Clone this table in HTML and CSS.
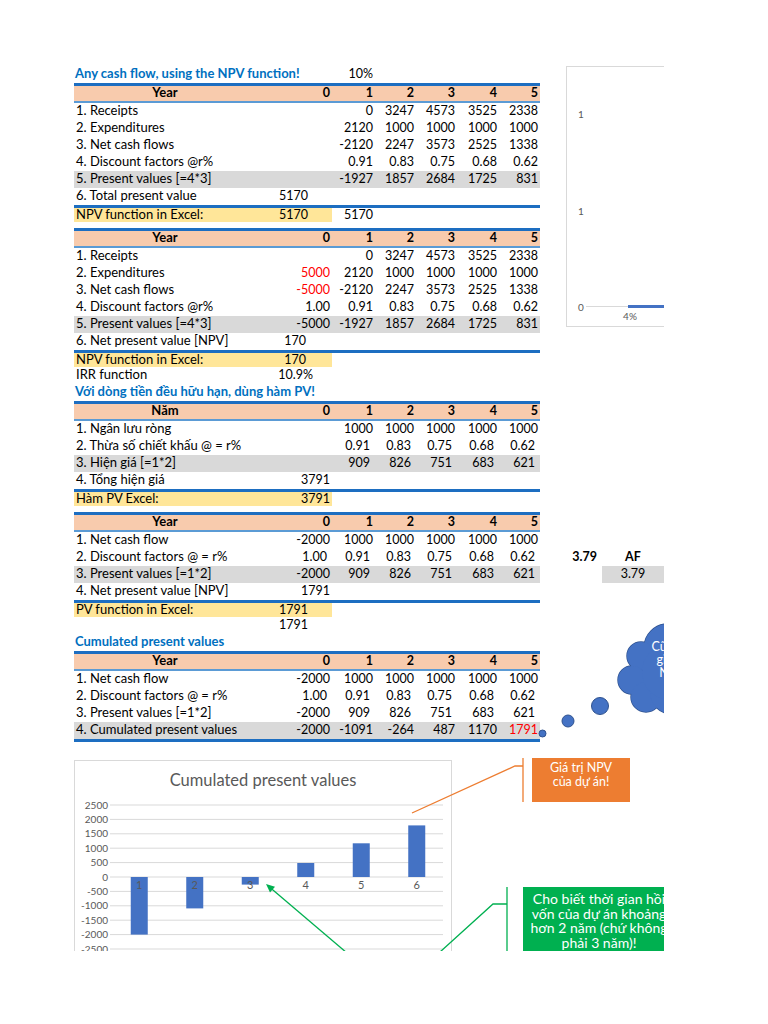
FILE: index.html
```html
<!DOCTYPE html>
<html lang="vi">
<head>
<meta charset="utf-8">
<title>NPV - Cumulated present values</title>
<link rel="stylesheet" href="styles.css">
</head>
<body>
<div class="page">
  <div class="sheet">
    <div class="row"><div class="title">Any cash flow, using the NPV function!</div><div class="n k1">10%</div></div>
    <section class="tbl">
      <div class="row hdr"><div class="hl">Year</div><div class="n bc">0</div><div class="n k1">1</div><div class="n k2">2</div><div class="n k3">3</div><div class="n k4">4</div><div class="n k5">5</div></div>
      <div class="row"><div class="l">1. Receipts</div><div class="n k1">0</div><div class="n k2">3247</div><div class="n k3">4573</div><div class="n k4">3525</div><div class="n k5">2338</div></div>
      <div class="row"><div class="l">2. Expenditures</div><div class="n k1">2120</div><div class="n k2">1000</div><div class="n k3">1000</div><div class="n k4">1000</div><div class="n k5">1000</div></div>
      <div class="row"><div class="l">3. Net cash flows</div><div class="n k1">-2120</div><div class="n k2">2247</div><div class="n k3">3573</div><div class="n k4">2525</div><div class="n k5">1338</div></div>
      <div class="row"><div class="l">4. Discount factors @r%</div><div class="n k1">0.91</div><div class="n k2">0.83</div><div class="n k3">0.75</div><div class="n k4">0.68</div><div class="n k5">0.62</div></div>
      <div class="row grey"><div class="l">5. Present values [=4*3]</div><div class="n k1">-1927</div><div class="n k2">1857</div><div class="n k3">2684</div><div class="n k4">1725</div><div class="n k5">831</div></div>
      <div class="row"><div class="l">6. Total present value</div><div class="n b">5170</div></div>
      <div class="row fn yel"><div class="l">NPV function in Excel:</div><div class="n b">5170</div><div class="n k1">5170</div></div>
    </section>

    <section class="tbl gap">
      <div class="row hdr"><div class="hl">Year</div><div class="n bc">0</div><div class="n k1">1</div><div class="n k2">2</div><div class="n k3">3</div><div class="n k4">4</div><div class="n k5">5</div></div>
      <div class="row"><div class="l">1. Receipts</div><div class="n k1">0</div><div class="n k2">3247</div><div class="n k3">4573</div><div class="n k4">3525</div><div class="n k5">2338</div></div>
      <div class="row"><div class="l">2. Expenditures</div><div class="n bc red">5000</div><div class="n k1">2120</div><div class="n k2">1000</div><div class="n k3">1000</div><div class="n k4">1000</div><div class="n k5">1000</div></div>
      <div class="row"><div class="l">3. Net cash flows</div><div class="n bc red">-5000</div><div class="n k1">-2120</div><div class="n k2">2247</div><div class="n k3">3573</div><div class="n k4">2525</div><div class="n k5">1338</div></div>
      <div class="row"><div class="l">4. Discount factors @r%</div><div class="n bc">1.00</div><div class="n k1">0.91</div><div class="n k2">0.83</div><div class="n k3">0.75</div><div class="n k4">0.68</div><div class="n k5">0.62</div></div>
      <div class="row grey"><div class="l">5. Present values [=4*3]</div><div class="n bc">-5000</div><div class="n k1">-1927</div><div class="n k2">1857</div><div class="n k3">2684</div><div class="n k4">1725</div><div class="n k5">831</div></div>
      <div class="row"><div class="l">6. Net present value [NPV]</div><div class="n b p4">170</div></div>
      <div class="row fn yel"><div class="l">NPV function in Excel:</div><div class="n b p4">170</div></div>
      <div class="row"><div class="l">IRR function</div><div class="n bc p20">10.9%</div></div>
      <div class="row"><div class="title">Với dòng tiền đều hữu hạn, dùng hàm PV!</div></div>
    </section>

    <section class="tbl">
      <div class="row hdr"><div class="hl">Năm</div><div class="n bc">0</div><div class="n k1">1</div><div class="n k2">2</div><div class="n k3">3</div><div class="n k4">4</div><div class="n k5">5</div></div>
      <div class="row"><div class="l">1. Ngân lưu ròng</div><div class="n k1">1000</div><div class="n k2">1000</div><div class="n k3">1000</div><div class="n k4">1000</div><div class="n k5">1000</div></div>
      <div class="row fmt"><div class="l">2. Thừa số chiết khấu @ = r%</div><div class="n k1">0.91</div><div class="n k2">0.83</div><div class="n k3">0.75</div><div class="n k4">0.68</div><div class="n k5">0.62</div></div>
      <div class="row grey fmt"><div class="l">3. Hiện giá [=1*2]</div><div class="n k1">909</div><div class="n k2">826</div><div class="n k3">751</div><div class="n k4">683</div><div class="n k5">621</div></div>
      <div class="row"><div class="l">4. Tổng hiện giá</div><div class="n bc">3791</div></div>
      <div class="row fn yel"><div class="l">Hàm PV Excel:</div><div class="n bc">3791</div></div>
    </section>

    <section class="tbl gap">
      <div class="row hdr"><div class="hl">Year</div><div class="n bc">0</div><div class="n k1">1</div><div class="n k2">2</div><div class="n k3">3</div><div class="n k4">4</div><div class="n k5">5</div></div>
      <div class="row"><div class="l">1. Net cash flow</div><div class="n bc">-2000</div><div class="n k1">1000</div><div class="n k2">1000</div><div class="n k3">1000</div><div class="n k4">1000</div><div class="n k5">1000</div></div>
      <div class="row wide fmt"><div class="l">2. Discount factors @ = r%</div><div class="n bc f0">1.00</div><div class="n k1">0.91</div><div class="n k2">0.83</div><div class="n k3">0.75</div><div class="n k4">0.68</div><div class="n k5">0.62</div><div class="n x1">3.79</div><div class="x2 bold">AF</div></div>
      <div class="row wide grey fmt"><div class="l">3. Present values [=1*2]</div><div class="n bc">-2000</div><div class="n k1">909</div><div class="n k2">826</div><div class="n k3">751</div><div class="n k4">683</div><div class="n k5">621</div><div class="x2 shade">3.79</div></div>
      <div class="row"><div class="l">4. Net present value [NPV]</div><div class="n bc">1791</div></div>
      <div class="row fn yel"><div class="l">PV function in Excel:</div><div class="n b">1791</div></div>
      <div class="row"><div class="n b">1791</div></div>
      <div class="row"><div class="title">Cumulated present values</div></div>
    </section>

    <section class="tbl">
      <div class="row hdr"><div class="hl">Year</div><div class="n bc">0</div><div class="n k1">1</div><div class="n k2">2</div><div class="n k3">3</div><div class="n k4">4</div><div class="n k5">5</div></div>
      <div class="row"><div class="l">1. Net cash flow</div><div class="n bc">-2000</div><div class="n k1">1000</div><div class="n k2">1000</div><div class="n k3">1000</div><div class="n k4">1000</div><div class="n k5">1000</div></div>
      <div class="row fmt"><div class="l">2. Discount factors @ = r%</div><div class="n bc f0">1.00</div><div class="n k1">0.91</div><div class="n k2">0.83</div><div class="n k3">0.75</div><div class="n k4">0.68</div><div class="n k5">0.62</div></div>
      <div class="row fmt"><div class="l">3. Present values [=1*2]</div><div class="n bc">-2000</div><div class="n k1">909</div><div class="n k2">826</div><div class="n k3">751</div><div class="n k4">683</div><div class="n k5">621</div></div>
      <div class="row grey bot"><div class="l">4. Cumulated present values</div><div class="n bc">-2000</div><div class="n k1">-1091</div><div class="n k2">-264</div><div class="n k3">487</div><div class="n k4">1170</div><div class="n k5 red">1791</div></div>
    </section>

    <div class="chart">
      <svg width="376" height="200" viewBox="0 0 376 200">
        <text class="ct" x="188" y="25" text-anchor="middle">Cumulated present values</text>
        <g class="grid">
          <line x1="35" y1="44" x2="368" y2="44"/>
          <line x1="35" y1="58.4" x2="368" y2="58.4"/>
          <line x1="35" y1="72.8" x2="368" y2="72.8"/>
          <line x1="35" y1="87.2" x2="368" y2="87.2"/>
          <line x1="35" y1="101.6" x2="368" y2="101.6"/>
          <line x1="35" y1="116" x2="368" y2="116"/>
          <line x1="35" y1="130.4" x2="368" y2="130.4"/>
          <line x1="35" y1="144.8" x2="368" y2="144.8"/>
          <line x1="35" y1="159.2" x2="368" y2="159.2"/>
          <line x1="35" y1="173.6" x2="368" y2="173.6"/>
          <line x1="35" y1="188" x2="368" y2="188"/>
        </g>
        <g class="ax" text-anchor="end">
          <text x="33" y="47.5">2500</text>
          <text x="33" y="61.9">2000</text>
          <text x="33" y="76.3">1500</text>
          <text x="33" y="90.7">1000</text>
          <text x="33" y="105.1">500</text>
          <text x="33" y="119.5">0</text>
          <text x="33" y="133.9">-500</text>
          <text x="33" y="148.3">-1000</text>
          <text x="33" y="162.7">-1500</text>
          <text x="33" y="177.1">-2000</text>
          <text x="33" y="191.5">-2500</text>
        </g>
        <g class="bars">
          <rect x="55.75" y="116" width="17" height="57.6"/>
          <rect x="111.25" y="116" width="17" height="31.4"/>
          <rect x="166.75" y="116" width="17" height="7.6"/>
          <rect x="222.25" y="102" width="17" height="14"/>
          <rect x="277.75" y="82.3" width="17" height="33.7"/>
          <rect x="333.25" y="64.4" width="17" height="51.6"/>
        </g>
        <g class="cat" text-anchor="middle">
          <text x="64.25" y="128">1</text>
          <text x="119.75" y="128">2</text>
          <text x="175.25" y="128">3</text>
          <text x="230.75" y="128">4</text>
          <text x="286.25" y="128">5</text>
          <text x="341.75" y="128">6</text>
        </g>
      </svg>
    </div>
  </div>

  <div class="side-chart">
    <svg width="120" height="259" viewBox="0 0 120 259">
      <g class="ax">
        <text x="11" y="51">1</text>
        <text x="11" y="148">1</text>
        <text x="11" y="243.5">0</text>
      </g>
      <line x1="19" y1="239.5" x2="62" y2="239.5" stroke="#d9d9d9" stroke-width="1"/>
      <line x1="61" y1="239.5" x2="120" y2="239.5" stroke="#4472c4" stroke-width="3"/>
      <text class="ax" x="63" y="252.5" text-anchor="middle">4%</text>
    </svg>
  </div>

  <div class="callout orange">Giá trị NPV<br>của dự án!</div>
  <div class="callout green">Cho biết thời gian hồi<br>vốn của dự án khoảng<br>hơn 2 năm (chứ không<br>phải 3 năm)!</div>

  <svg class="overlay" width="664" height="951" viewBox="0 0 664 951">
    <g fill="none" stroke="#ed7d31" stroke-width="1.3">
      <polyline points="412,813 515,766 523,766"/>
      <line x1="523" y1="758" x2="523" y2="802"/>
    </g>
    <g fill="none" stroke="#00b050" stroke-width="1.3">
      <line x1="507" y1="887" x2="507" y2="951"/>
      <polyline points="507,904 493,904 440,952"/>
      <line x1="270" y1="887.5" x2="347" y2="953"/>
    </g>
    <polygon points="266,884 275,886.8 270,892.4" fill="#00b050"/>
    <g stroke="#2f528f" stroke-width="1.4" fill="#4472c4">
      <circle cx="668" cy="648" r="24"/>
      <circle cx="641" cy="656" r="14"/>
      <circle cx="632" cy="680" r="14"/>
      <circle cx="646" cy="697" r="15"/>
      <circle cx="672" cy="692" r="22"/>
      <circle cx="695" cy="660" r="25"/>
    </g>
    <g fill="#4472c4">
      <circle cx="668" cy="648" r="24"/>
      <circle cx="641" cy="656" r="14"/>
      <circle cx="632" cy="680" r="14"/>
      <circle cx="646" cy="697" r="15"/>
      <circle cx="672" cy="692" r="22"/>
      <circle cx="695" cy="660" r="25"/>
      <circle cx="670" cy="672" r="28"/>
    </g>
    <g class="cloud-text" text-anchor="middle">
      <text x="672" y="651">Cũng là</text>
      <text x="672" y="664">giá trị</text>
      <text x="672" y="677">NPV</text>
    </g>
    <g fill="#4472c4" stroke="#2f528f" stroke-width="1">
      <circle cx="600" cy="706" r="8.5"/>
      <circle cx="568" cy="721" r="6"/>
      <circle cx="542.5" cy="733.5" r="3.5"/>
    </g>
  </svg>
</div>
</body>
</html>
```

FILE: styles.css
```css
* {
  box-sizing: border-box;
  margin: 0;
  padding: 0;
}

html, body {
  background: #ffffff;
}

body {
  font-family: Lato, "Noto Sans", "Liberation Sans", sans-serif;
  font-size: 13px;
  color: #000000;
}

.page {
  position: relative;
  width: 664px;
  height: 951px;
  overflow: hidden;
}

.sheet {
  padding: 66px 0 0 74px;
}

.tbl.gap {
  margin-top: 6px;
}

.row {
  display: grid;
  grid-template-columns: 182px 54px 23px 42px 41px 41px 42px 41px;
  width: 466px;
  height: 17px;
  line-height: 15px;
  white-space: nowrap;
}

.row.wide {
  grid-template-columns: 182px 54px 23px 42px 41px 41px 42px 41px 62px 62px;
  width: 590px;
}

.title {
  grid-column: 1 / 4;
  padding-left: 1px;
  color: #0070c0;
  font-weight: 700;
}

.l {
  grid-column: 1;
  padding-left: 2px;
}

.n {
  text-align: right;
  padding-right: 2px;
  font-size: 12.5px;
}

.b { grid-column: 2; }
.bc { grid-column: 2 / 4; padding-right: 3px; }
.k1 { grid-column: 4; }
.k2 { grid-column: 5; }
.k3 { grid-column: 6; }
.k4 { grid-column: 7; }
.k5 { grid-column: 8; }

.p4 { padding-right: 4px; }
.p20 { padding-right: 20px; }

.fmt .k1, .fmt .k2, .fmt .k3, .fmt .k4, .fmt .k5 {
  padding-right: 5px;
}

.fmt .f0 {
  padding-right: 6px;
}

.x1 {
  grid-column: 9;
  padding-right: 5px;
  font-weight: 700;
}

.x2 {
  grid-column: 10;
  text-align: center;
  font-size: 12.5px;
}

.bold {
  font-weight: 700;
}

.shade {
  background: #d9d9d9;
}

.red {
  color: #ff0000;
}

.hdr {
  height: 20px;
  border-top: 3px solid #1d6ec1;
  border-bottom: 2px solid #5b9bd5;
  background: #f8cbad;
  font-weight: 700;
  line-height: 13px;
}

.hl {
  grid-column: 1;
  text-align: center;
}

.grey {
  background: linear-gradient(#d9d9d9, #d9d9d9) 0 0 / 466px 100% no-repeat;
}

.fn {
  border-top: 3px solid #1d6ec1;
  height: 17px;
  line-height: 13px;
}

.fn.yel {
  background: linear-gradient(#ffe699, #ffe699) 0 0 / 258px 100% no-repeat;
}

.bot {
  height: 20px;
  border-bottom: 3px solid #1d6ec1;
}

.chart {
  margin-top: 18px;
  width: 378px;
  height: 202px;
  border: 1px solid #d9d9d9;
}

.chart svg,
.side-chart svg {
  display: block;
}

.ct {
  font-family: Lato, "Noto Sans", sans-serif;
  font-size: 16.5px;
  fill: #595959;
}

.grid line {
  stroke: #d9d9d9;
  stroke-width: 1;
}

.ax {
  font-family: Lato, "Noto Sans", sans-serif;
  font-size: 10px;
  fill: #595959;
}

.ax text {
  fill: #595959;
}

.bars rect {
  fill: #4472c4;
}

.cat {
  font-family: Lato, "Noto Sans", sans-serif;
  font-size: 11px;
  fill: #595959;
}

.side-chart {
  position: absolute;
  left: 566px;
  top: 66px;
  width: 120px;
  height: 261px;
  border: 1px solid #d9d9d9;
  background: #ffffff;
}

.callout {
  position: absolute;
  color: #ffffff;
  text-align: center;
  white-space: nowrap;
}

.callout.orange {
  left: 532px;
  top: 758px;
  width: 98px;
  height: 44px;
  padding-top: 3px;
  background: #ed7d31;
  font-size: 12.5px;
  line-height: 14px;
}

.callout.green {
  left: 523px;
  top: 887px;
  width: 152px;
  height: 80px;
  padding-top: 5px;
  background: #00b050;
  font-size: 14px;
  line-height: 14.7px;
}

.overlay {
  position: absolute;
  left: 0;
  top: 0;
  pointer-events: none;
}

.cloud-text {
  font-family: Lato, "Noto Sans", sans-serif;
  font-size: 12.5px;
  fill: #ffffff;
}
```
